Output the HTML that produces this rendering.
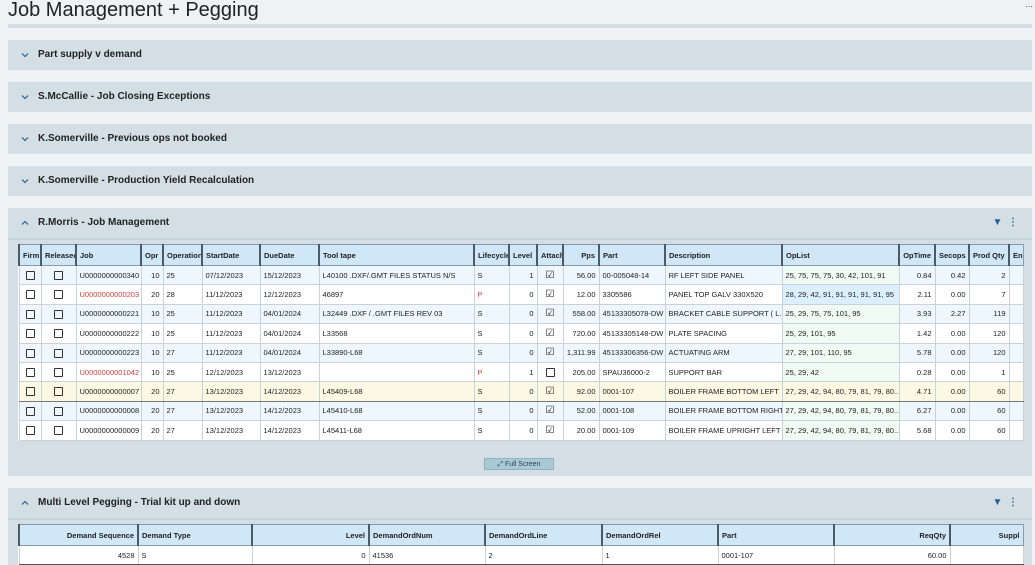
<!DOCTYPE html>
<html><head><meta charset="utf-8"><style>
*{box-sizing:border-box;margin:0;padding:0}
body{width:1035px;height:565px;overflow:hidden;background:#eef2f5;font-family:"Liberation Sans",sans-serif;color:#222;position:relative}
.title{position:absolute;left:8px;top:-1px;font-size:20px;color:#222}
.bar{position:absolute;left:8px;top:24px;width:1024px;height:4px;background:#d3dde2}
.panel{position:absolute;left:8px;width:1024px;background:#d3dfe4}
.ph{height:30px;line-height:30px;font-size:10px;font-weight:bold;padding-left:30px;position:relative;color:#222}
.ph svg.ch{position:absolute;left:13px;top:12px}
.icons{position:absolute;right:14px;top:0;font-size:10px;color:#1f5f9a}
table{border-collapse:collapse;table-layout:fixed;font-size:7.5px;position:absolute;left:10px;background:#fff}
th{background:#cfe7f7;height:21px;border:1px solid #8a9aa6;border-left:2px solid #4a5a66;text-align:left;padding:0 3px;font-weight:bold;white-space:nowrap;overflow:hidden}
td{height:19.4px;border:1px solid #c8d2d8;padding:0 3px;white-space:nowrap;overflow:hidden}
tr.a td{background:#eef7fd}
tr.b td{background:#fff}
tr.s td{background:#fbf9e4;border-top:1px solid #777;border-bottom:1px solid #777}
.r{text-align:right}.c{text-align:center}.red{color:#d04040}
.cb{display:inline-block;width:9px;height:9px;border:1.3px solid #333;border-radius:1px;vertical-align:middle}
.ck{font-size:10px;line-height:9px}
td.ol{background:#eefaf3!important}
.fs{position:absolute;left:476px;top:250px;width:70px;height:12px;background:#a9c9d6;border:1px solid #8eb3c4;font-size:7px;color:#345;text-align:center;line-height:11px}
</style></head><body>
<div class="title">Job Management + Pegging</div>
<div style="position:absolute;right:2px;top:2px;font-size:8px">···</div>
<div class="bar"></div>
<div class="panel" style="top:40px;height:30px"><div class="ph"><svg class="ch" width="8" height="6" viewBox="0 0 8 6"><path d="M1 1.5L4 4.5L7 1.5" fill="none" stroke="#3a6e9a" stroke-width="1.3"/></svg>Part supply v demand</div></div>
<div class="panel" style="top:82px;height:30px"><div class="ph"><svg class="ch" width="8" height="6" viewBox="0 0 8 6"><path d="M1 1.5L4 4.5L7 1.5" fill="none" stroke="#3a6e9a" stroke-width="1.3"/></svg>S.McCallie - Job Closing Exceptions</div></div>
<div class="panel" style="top:124px;height:30px"><div class="ph"><svg class="ch" width="8" height="6" viewBox="0 0 8 6"><path d="M1 1.5L4 4.5L7 1.5" fill="none" stroke="#3a6e9a" stroke-width="1.3"/></svg>K.Somerville - Previous ops not booked</div></div>
<div class="panel" style="top:166px;height:30px"><div class="ph"><svg class="ch" width="8" height="6" viewBox="0 0 8 6"><path d="M1 1.5L4 4.5L7 1.5" fill="none" stroke="#3a6e9a" stroke-width="1.3"/></svg>K.Somerville - Production Yield Recalculation</div></div>
<div class="panel" style="top:208px;height:268px"><div class="ph"><svg class="ch" width="8" height="6" viewBox="0 0 8 6"><path d="M1 4.5L4 1.5L7 4.5" fill="none" stroke="#3a6e9a" stroke-width="1.3"/></svg>R.Morris - Job Management<span class="icons">▼ &nbsp;⋮</span></div>
<div style="position:absolute;left:0;top:30px;width:1024px;height:2px;background:#c3d1d8"></div>
<table style="top:36px;width:1004px">
<colgroup><col style="width:22px"><col style="width:35px"><col style="width:65px"><col style="width:22px"><col style="width:39px"><col style="width:58px"><col style="width:59px"><col style="width:155px"><col style="width:35px"><col style="width:28px"><col style="width:26px"><col style="width:36px"><col style="width:66px"><col style="width:117px"><col style="width:117px"><col style="width:36px"><col style="width:34px"><col style="width:40px"><col style="width:14px"></colgroup>
<tr><th>Firm</th><th>Released</th><th>Job</th><th>Opr</th><th>Operation</th><th>StartDate</th><th>DueDate</th><th>Tool tape</th><th>Lifecycle</th><th>Level</th><th>Attach</th><th class="r">Pps</th><th>Part</th><th>Description</th><th>OpList</th><th class="r">OpTime</th><th>Secops</th><th>Prod Qty</th><th>Eng</th></tr>
<tr class="a"><td class="c"><span class="cb"></span></td><td class="c"><span class="cb"></span></td><td>U0000000000340</td><td class="r">10</td><td>25</td><td>07/12/2023</td><td>15/12/2023</td><td>L40100 .DXF/.GMT FILES STATUS N/S</td><td>S</td><td class="r">1</td><td class="c ck">☑</td><td class="r">56.00</td><td>00-005048-14</td><td>RF LEFT SIDE PANEL</td><td class="ol">25, 75, 75, 75, 30, 42, 101, 91</td><td class="r">0.84</td><td class="r">0.42</td><td class="r">2</td><td></td></tr>
<tr class="b"><td class="c"><span class="cb"></span></td><td class="c"><span class="cb"></span></td><td class="red">U0000000000203</td><td class="r">20</td><td>28</td><td>11/12/2023</td><td>12/12/2023</td><td>46897</td><td class="red">P</td><td class="r">0</td><td class="c ck">☑</td><td class="r">12.00</td><td>3305586</td><td>PANEL TOP GALV 330X520</td><td style="background:#dcefff">28, 29, 42, 91, 91, 91, 91, 91, 95</td><td class="r">2.11</td><td class="r">0.00</td><td class="r">7</td><td></td></tr>
<tr class="a"><td class="c"><span class="cb"></span></td><td class="c"><span class="cb"></span></td><td>U0000000000221</td><td class="r">10</td><td>25</td><td>11/12/2023</td><td>04/01/2024</td><td>L32449 .DXF / .GMT FILES REV 03</td><td>S</td><td class="r">0</td><td class="c ck">☑</td><td class="r">558.00</td><td>45133305078-DW</td><td>BRACKET CABLE SUPPORT ( L...</td><td class="ol">25, 29, 75, 75, 101, 95</td><td class="r">3.93</td><td class="r">2.27</td><td class="r">119</td><td></td></tr>
<tr class="b"><td class="c"><span class="cb"></span></td><td class="c"><span class="cb"></span></td><td>U0000000000222</td><td class="r">10</td><td>25</td><td>11/12/2023</td><td>04/01/2024</td><td>L33568</td><td>S</td><td class="r">0</td><td class="c ck">☑</td><td class="r">720.00</td><td>45133305148-DW</td><td>PLATE SPACING</td><td class="ol">25, 29, 101, 95</td><td class="r">1.42</td><td class="r">0.00</td><td class="r">120</td><td></td></tr>
<tr class="a"><td class="c"><span class="cb"></span></td><td class="c"><span class="cb"></span></td><td>U0000000000223</td><td class="r">10</td><td>27</td><td>11/12/2023</td><td>04/01/2024</td><td>L33890-L68</td><td>S</td><td class="r">0</td><td class="c ck">☑</td><td class="r">1,311.99</td><td>45133306356-DW</td><td>ACTUATING ARM</td><td class="ol">27, 29, 101, 110, 95</td><td class="r">5.78</td><td class="r">0.00</td><td class="r">120</td><td></td></tr>
<tr class="b"><td class="c"><span class="cb"></span></td><td class="c"><span class="cb"></span></td><td class="red">U0000000001042</td><td class="r">10</td><td>25</td><td>12/12/2023</td><td>13/12/2023</td><td></td><td class="red">P</td><td class="r">1</td><td class="c"><span class="cb"></span></td><td class="r">205.00</td><td>SPAU36000-2</td><td>SUPPORT BAR</td><td class="ol">25, 29, 42</td><td class="r">0.28</td><td class="r">0.00</td><td class="r">1</td><td></td></tr>
<tr class="s"><td class="c"><span class="cb"></span></td><td class="c"><span class="cb"></span></td><td>U0000000000007</td><td class="r">20</td><td>27</td><td>13/12/2023</td><td>14/12/2023</td><td>L45409-L68</td><td>S</td><td class="r">0</td><td class="c ck">☑</td><td class="r">92.00</td><td>0001-107</td><td>BOILER FRAME BOTTOM LEFT</td><td>27, 29, 42, 94, 80, 79, 81, 79, 80...</td><td class="r">4.71</td><td class="r">0.00</td><td class="r">60</td><td></td></tr>
<tr class="a"><td class="c"><span class="cb"></span></td><td class="c"><span class="cb"></span></td><td>U0000000000008</td><td class="r">20</td><td>27</td><td>13/12/2023</td><td>14/12/2023</td><td>L45410-L68</td><td>S</td><td class="r">0</td><td class="c ck">☑</td><td class="r">52.00</td><td>0001-108</td><td>BOILER FRAME BOTTOM RIGHT</td><td class="ol">27, 29, 42, 94, 80, 79, 81, 79, 80...</td><td class="r">6.27</td><td class="r">0.00</td><td class="r">60</td><td></td></tr>
<tr class="b"><td class="c"><span class="cb"></span></td><td class="c"><span class="cb"></span></td><td>U0000000000009</td><td class="r">20</td><td>27</td><td>13/12/2023</td><td>14/12/2023</td><td>L45411-L68</td><td>S</td><td class="r">0</td><td class="c ck">☑</td><td class="r">20.00</td><td>0001-109</td><td>BOILER FRAME UPRIGHT LEFT</td><td class="ol">27, 29, 42, 94, 80, 79, 81, 79, 80...</td><td class="r">5.68</td><td class="r">0.00</td><td class="r">60</td><td></td></tr>
</table>
<div class="fs">⤢ Full Screen</div>
</div>
<div class="panel" style="top:488px;height:77px"><div class="ph"><svg class="ch" width="8" height="6" viewBox="0 0 8 6"><path d="M1 4.5L4 1.5L7 4.5" fill="none" stroke="#3a6e9a" stroke-width="1.3"/></svg>Multi Level Pegging - Trial kit up and down<span class="icons">▼ &nbsp;⋮</span></div>
<div style="position:absolute;left:0;top:30px;width:1024px;height:2px;background:#c3d1d8"></div>
<table style="top:36px;width:1004px">
<colgroup><col style="width:119px"><col style="width:114px"><col style="width:117px"><col style="width:116px"><col style="width:117px"><col style="width:116px"><col style="width:116px"><col style="width:116px"><col style="width:73px"></colgroup>
<tr><th class="r">Demand Sequence</th><th>Demand Type</th><th class="r">Level</th><th>DemandOrdNum</th><th>DemandOrdLine</th><th>DemandOrdRel</th><th>Part</th><th class="r">ReqQty</th><th class="r">Suppl</th></tr>
<tr class="b"><td class="r" style="border-bottom:1px solid #555;border-top:1px solid #555">4528</td><td style="border-bottom:1px solid #555;border-top:1px solid #555">S</td><td class="r" style="border-bottom:1px solid #555;border-top:1px solid #555">0</td><td style="border-bottom:1px solid #555;border-top:1px solid #555">41536</td><td style="border-bottom:1px solid #555;border-top:1px solid #555">2</td><td style="border-bottom:1px solid #555;border-top:1px solid #555">1</td><td style="border-bottom:1px solid #555;border-top:1px solid #555">0001-107</td><td class="r" style="border-bottom:1px solid #555;border-top:1px solid #555">60.00</td><td style="border-bottom:1px solid #555;border-top:1px solid #555"></td></tr>
</table>
</div>
</body></html>
